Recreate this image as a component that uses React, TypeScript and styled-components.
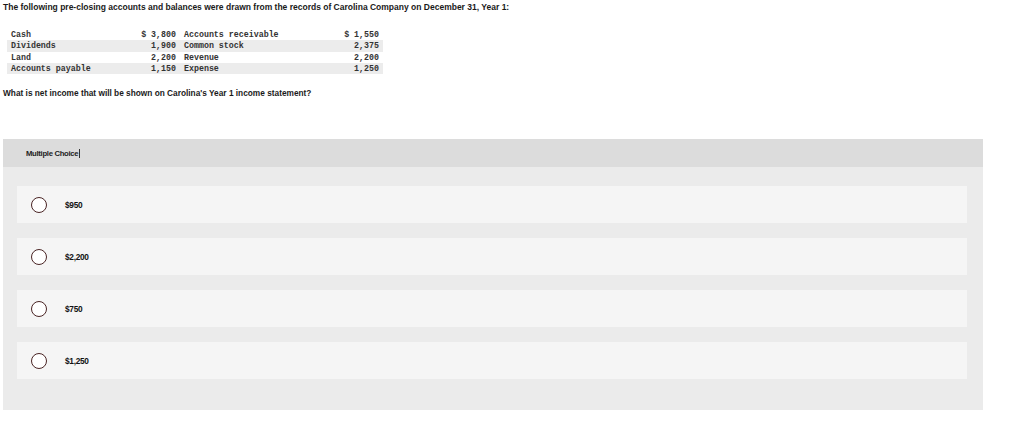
import React from 'react'
import styled, { createGlobalStyle } from 'styled-components'

const GlobalStyle = createGlobalStyle`
  html, body {
    margin: 0;
    padding: 0;
    background: #fff;
  }
  body {
    font-family: 'Liberation Sans', Arial, sans-serif;
    color: #111;
  }
`

const Page = styled.div`
  width: 1024px;
  height: 440px;
  padding: 2px 41px 0 3px;
  box-sizing: border-box;
`

const Prompt = styled.p`
  margin: 0;
  font-size: 8.5px;
  line-height: 11px;
  font-weight: bold;
  color: #1a1a1a;
`

const Ledger = styled.table`
  margin: 16px 0 0 4px;
  border-collapse: collapse;
  width: 376px;
  font-family: 'Liberation Mono', 'DejaVu Sans Mono', monospace;
  font-size: 8.3px;
  font-weight: bold;
  color: #333;
`

const LedgerRow = styled.tr<{ $shaded: boolean }>`
  height: 11.3px;
  background: ${(p) => (p.$shaded ? '#ececec' : 'transparent')};
`

const Cell = styled.td<{ $right?: boolean; $w?: number }>`
  padding: 0 4px;
  white-space: pre;
  text-align: ${(p) => (p.$right ? 'right' : 'left')};
  width: ${(p) => (p.$w ? `${p.$w}px` : 'auto')};
  line-height: 11px;
`

const Question = styled(Prompt)`
  margin-top: 14px;
  font-size: 8.3px;
`

const Panel = styled.section`
  margin-top: 40px;
  background: #ebebeb;
  padding-bottom: 31px;
`

const PanelHeader = styled.header`
  height: 28px;
  background: #dcdcdc;
  display: flex;
  align-items: center;
  padding-left: 23px;
  font-size: 7.7px;
  font-weight: bold;
  color: #222;
  letter-spacing: -0.3px;
`

const Caret = styled.span`
  display: inline-block;
  width: 1px;
  height: 9px;
  background: #333;
  margin-left: 1px;
`

const Options = styled.div`
  display: flex;
  flex-direction: column;
  gap: 15px;
  padding: 19px 16px 0 14px;
`

const Option = styled.label`
  height: 37px;
  background: #f5f5f5;
  display: flex;
  align-items: center;
  padding-left: 14px;
  gap: 18px;
  font-size: 8.3px;
  font-weight: bold;
  color: #111;
  letter-spacing: -0.3px;
`

const Radio = styled.span`
  width: 14px;
  height: 14px;
  border-radius: 50%;
  border: 1.5px solid #4a2525;
  background: #fff;
  flex: none;
`

const accounts = [
  ['Cash', '$ 3,800', 'Accounts receivable', '$ 1,550'],
  ['Dividends', '1,900', 'Common stock', '2,375'],
  ['Land', '2,200', 'Revenue', '2,200'],
  ['Accounts payable', '1,150', 'Expense', '1,250'],
]

const choices = ['$950', '$2,200', '$750', '$1,250']

export default function App() {
  return (
    <Page>
      <GlobalStyle />
      <Prompt>
        The following pre-closing accounts and balances were drawn from the records of Carolina
        Company on December 31, Year 1:
      </Prompt>
      <Ledger>
        <tbody>
          {accounts.map((row, i) => (
            <LedgerRow key={row[0]} $shaded={i % 2 === 1}>
              <Cell $w={105}>{row[0]}</Cell>
              <Cell $right $w={52}>{row[1]}</Cell>
              <Cell>{row[2]}</Cell>
              <Cell $right $w={50}>{row[3]}</Cell>
            </LedgerRow>
          ))}
        </tbody>
      </Ledger>
      <Question>What is net income that will be shown on Carolina's Year 1 income statement?</Question>
      <Panel>
        <PanelHeader>
          Multiple Choice
          <Caret />
        </PanelHeader>
        <Options>
          {choices.map((c) => (
            <Option key={c}>
              <Radio />
              {c}
            </Option>
          ))}
        </Options>
      </Panel>
    </Page>
  )
}
